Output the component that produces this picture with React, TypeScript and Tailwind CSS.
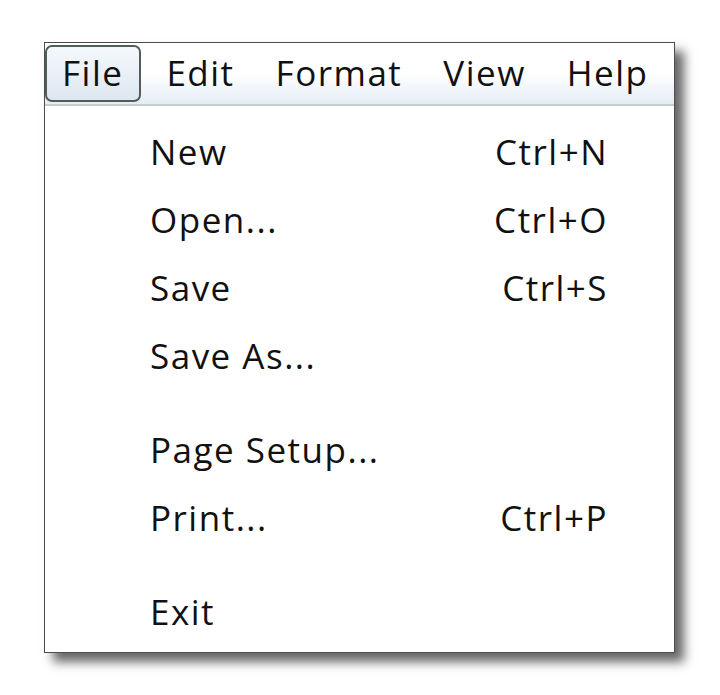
import React from 'react';

type Item = { label: string; shortcut?: string } | 'sep';

const items: Item[] = [
  { label: 'New', shortcut: 'Ctrl+N' },
  { label: 'Open...', shortcut: 'Ctrl+O' },
  { label: 'Save', shortcut: 'Ctrl+S' },
  { label: 'Save As...' },
  'sep',
  { label: 'Page Setup...' },
  { label: 'Print...', shortcut: 'Ctrl+P' },
  'sep',
  { label: 'Exit' },
];

const menus = ['File', 'Edit', 'Format', 'View', 'Help'];

const App: React.FC = () => {
  return (
    <div
      className="w-[720px] h-[695px] bg-white pl-[44px] pt-[42px]"
      style={{ fontFamily: '"Open Sans", "Noto Sans", sans-serif' }}
    >
      <div className="w-[631px] h-[611px] bg-white border border-[#4d4d4d] shadow-[9px_9px_10px_rgba(0,0,0,0.6)] flex flex-col">
        {/* Menu bar */}
        <div className="h-[63px] flex items-center gap-[10px] bg-gradient-to-b from-white via-white to-[#e4ecf4] border-b-2 border-[#c5ceca]">
          {menus.map((m, i) => (
            <div
              key={m}
              className={`h-[57px] flex items-center pl-[15px] pr-[16px] text-[35px] tracking-[1.5px] text-[#111] ${
                i === 0
                  ? 'rounded-[7px] border-2 border-[#525c5a] bg-gradient-to-b from-[#f4f8fc] to-[#dde7f1]'
                  : ''
              }`}
            >
              {m}
            </div>
          ))}
        </div>

        {/* Dropdown items */}
        <div className="flex flex-col pt-[12px] pl-[105px] pr-[66px] text-[35px] tracking-[1.5px] text-[#111]">
          {items.map((it, i) =>
            it === 'sep' ? (
              <div key={i} className="h-[26px]" />
            ) : (
              <div key={i} className="h-[68px] flex items-center justify-between">
                <span>{it.label}</span>
                {it.shortcut && <span>{it.shortcut}</span>}
              </div>
            )
          )}
        </div>
      </div>
    </div>
  );
};

export default App;
